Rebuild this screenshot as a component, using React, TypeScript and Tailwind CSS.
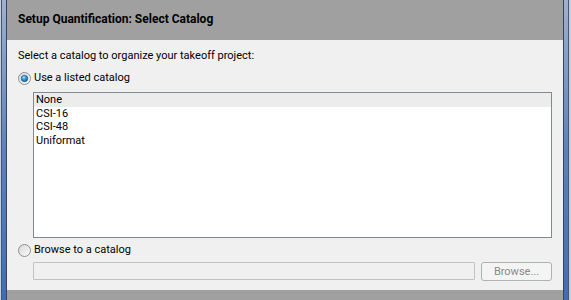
import React from "react";

function Radio({ checked }: { checked: boolean }) {
  return (
    <svg width="13" height="13" viewBox="0 0 13 13" className="shrink-0">
      <defs>
        <linearGradient id={checked ? "rg1" : "rg0"} x1="0" y1="0" x2="1" y2="1">
          <stop offset="0" stopColor="#d8d8d8" />
          <stop offset="1" stopColor="#fbfbfb" />
        </linearGradient>
        <radialGradient id="dot" cx="0.4" cy="0.35" r="0.7">
          <stop offset="0" stopColor="#a9e4ff" />
          <stop offset="0.5" stopColor="#2c8fd0" />
          <stop offset="1" stopColor="#1a5e99" />
        </radialGradient>
      </defs>
      <circle cx="6.5" cy="6.5" r="6" fill={`url(#${checked ? "rg1" : "rg0"})`} stroke="#8e8f8f" strokeWidth="1" />
      {checked && <circle cx="6.5" cy="6.5" r="3.3" fill="url(#dot)" stroke="#1b5e91" strokeWidth="0.6" />}
    </svg>
  );
}

export default function App() {
  const items = ["None", "CSI-16", "CSI-48", "Uniformat"];
  return (
    <div
      className="flex w-[571px] h-[300px] overflow-hidden text-[11px] text-black"
      style={{ fontFamily: 'Roboto, "Liberation Sans", sans-serif' }}
    >
      {/* left frame */}
      <div className="flex w-[7px] shrink-0">
        <div className="w-px bg-[#c3cfe0]" />
        <div className="w-px bg-[#4a5670]" />
        <div className="w-[4px] bg-gradient-to-b from-[#9fb1cd] via-[#5c82bd] to-[#3f6db5]" />
        <div className="w-px bg-[#36455e]" />
      </div>

      <div className="flex flex-col flex-1">
        <div className="h-[40px] bg-[#a0a0a0] flex items-center pl-[11px] pb-[2px] font-bold text-[12px] leading-none">
          Setup Quantification: Select Catalog
        </div>
        <div className="flex-1 bg-[#f0f0f0] px-[11px] flex flex-col">
          <div className="mt-[8px] h-[16px] leading-[16px]">Select a catalog to organize your takeoff project:</div>
          <div className="mt-[6px] h-[16px] flex items-center gap-[3px]">
            <Radio checked />
            <span className="leading-[16px]">Use a listed catalog</span>
          </div>
          <div className="mt-[6px] ml-[15px] h-[146px] border border-[#828790] bg-white flex flex-col">
            {items.map((it, i) => (
              <div
                key={it}
                className={`h-[13.5px] leading-[14px] pl-[2px] ${i === 0 ? "bg-[#ececec]" : ""}`}
              >
                {it}
              </div>
            ))}
          </div>
          <div className="mt-[4px] h-[16px] flex items-center gap-[3px]">
            <Radio checked={false} />
            <span className="leading-[16px]">Browse to a catalog</span>
          </div>
          <div className="mt-[4px] ml-[15px] flex gap-[6px]">
            <div className="flex-1 h-[18px] border border-[#c2c2c2] bg-[#f0f0f0] rounded-[1px]" />
            <div className="w-[71px] h-[19px] border border-[#adb2b5] rounded-[3px] bg-[#f4f4f4] text-[#8a8a8a] flex items-center justify-center leading-none">
              Browse...
            </div>
          </div>
        </div>
        <div className="h-[10px] bg-[#a0a0a0]" />
      </div>

      {/* right frame */}
      <div className="flex w-[8px] shrink-0">
        <div className="w-px bg-[#36455e]" />
        <div className="w-[4px] bg-gradient-to-b from-[#9fb1cd] via-[#5c82bd] to-[#3f6db5]" />
        <div className="w-px bg-[#4a5670]" />
        <div className="w-[2px] bg-[#c3cfe0]" />
      </div>
    </div>
  );
}
